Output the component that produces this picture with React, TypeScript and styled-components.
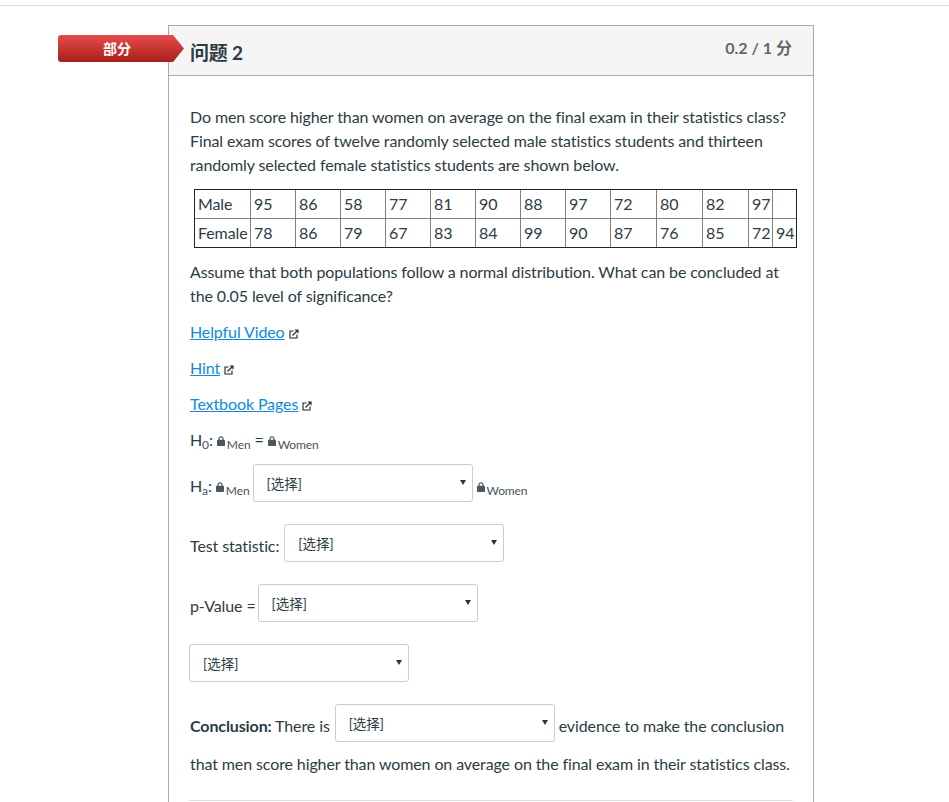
import React from "react";
import styled, { createGlobalStyle } from "styled-components";

const GlobalStyle = createGlobalStyle`
  html, body {
    margin: 0;
    height: 802px;
    overflow: hidden;
    background: #fff;
  }
  body {
    font-family: Lato, "Noto Sans CJK SC", sans-serif;
    font-size: 16px;
    line-height: 24px;
    letter-spacing: -0.11px;
    color: #2d3b45;
  }
`;

const TopRule = styled.div`
  height: 5px;
  border-bottom: 1px solid #ddd;
`;

const Main = styled.main`
  padding: 19px 0 0 168px;
`;

const Question = styled.section`
  position: relative;
  box-sizing: border-box;
  width: 646px;
  height: 780px;
  border: 1px solid #aaa;
  border-bottom: 0;
`;

const Badge = styled.div`
  position: absolute;
  left: -111px;
  top: 9px;
  box-sizing: border-box;
  width: 126px;
  height: 27px;
  padding-right: 8px;
  border-radius: 3px 0 0 3px;
  background: linear-gradient(#e64b4b, #a8201a);
  clip-path: polygon(0 0, 115px 0, 126px 50%, 115px 100%, 0 100%);
  color: #fff;
  font-size: 14px;
  font-weight: 700;
  line-height: 27px;
  text-align: center;
`;

const Header = styled.header`
  box-sizing: border-box;
  height: 50px;
  display: flex;
  justify-content: space-between;
  padding: 0 21px;
  background: #f5f5f5;
  border-bottom: 1px solid #aaa;
`;

const Title = styled.h2`
  margin: 14px 0 0;
  font-size: 19px;
  font-weight: 700;
  line-height: 26px;
  letter-spacing: -0.2px;
  color: #2d3b45;
`;

const Score = styled.div`
  margin-top: 10px;
  font-weight: 700;
  line-height: 24px;
  letter-spacing: 0;
  color: #5f6870;
`;

const Body = styled.div`
  padding: 17px 20px 0 21px;
`;

const Para = styled.p`
  margin: 12px 0;
`;

const DataTable = styled.table`
  margin: 12px 0 12px 4px;
  width: 603px;
  table-layout: fixed;
  border-collapse: separate;
  border-spacing: 0;
  border: 1px solid #222;
  font-size: 16px;
`;

const Cell = styled.td`
  box-sizing: border-box;
  height: 28px;
  padding: 0 0 0 3px;
  white-space: nowrap;
  overflow: hidden;

  & + & {
    border-left: 1px solid #808080;
  }
`;

const Row = styled.tr`
  & + & ${Cell} {
    height: 29px;
    border-top: 1px solid #808080;
  }
`;

const Column = styled.col<{ $width: number }>`
  width: ${(p) => p.$width}px;
`;

const ExternalLink = styled.a`
  color: #0e8ae0;
  text-decoration: underline;
`;

const ExternalMark = styled.svg`
  width: 10px;
  height: 10px;
  margin-left: 4px;
  vertical-align: -1px;
`;

const LockMark = styled.svg`
  width: 8px;
  height: 10px;
  margin-right: 2px;
`;

const Sub = styled.sub`
  font-size: 12px;
  line-height: 0;
  vertical-align: -3px;
  color: #46535e;
`;

const SelectBox = styled.span<{ $shift: number }>`
  position: relative;
  display: inline-block;
  margin-bottom: 10px;
  margin-left: ${(p) => p.$shift}px;
  vertical-align: 3px;

  &::after {
    content: "";
    position: absolute;
    right: 7px;
    top: 16px;
    border-style: solid;
    border-width: 5px 3px 0;
    border-color: #333 transparent transparent;
    pointer-events: none;
  }
`;

const Select = styled.select`
  appearance: none;
  box-sizing: border-box;
  display: block;
  width: 220px;
  height: 38px;
  padding: 2px 20px 0 13px;
  border: 1px solid #c7cdd1;
  border-radius: 3px;
  background: #fff;
  color: #2d3b45;
  font-family: Lato, "Noto Sans CJK SC", sans-serif;
  font-size: 13.5px;
`;

const Divider = styled.hr`
  margin: 24px 0 0 -1px;
  border: 0;
  border-top: 1px solid #ddd;
`;

const columnWidths = [55, 45, 45, 45, 45, 45, 45, 45, 45, 46, 46, 46, 24, 24];
const male = ["Male", "95", "86", "58", "77", "81", "90", "88", "97", "72", "80", "82", "97", ""];
const female = ["Female", "78", "86", "79", "67", "83", "84", "99", "90", "87", "76", "85", "72", "94"];

function External() {
  return (
    <ExternalMark viewBox="0 0 10 10" fill="none" stroke="#222" strokeWidth="1.1">
      <path d="M4.5 2H1v7h7V5.5" />
      <path d="M3.5 6.5 9 1M5.8 1H9v3.2" />
    </ExternalMark>
  );
}

function Lock() {
  return (
    <LockMark viewBox="0 0 8 10">
      <path d="M2 4.5V2.8a2 2 0 0 1 4 0v1.7" fill="none" stroke="#4b5660" strokeWidth="1.2" />
      <rect x="0" y="3.8" width="8" height="6.2" rx="0.8" fill="#4b5660" />
    </LockMark>
  );
}

function Choice({ shift = 0 }: { shift?: number }) {
  return (
    <SelectBox $shift={shift}>
      <Select defaultValue="">
        <option value="">[选择]</option>
      </Select>
    </SelectBox>
  );
}

export default function App() {
  return (
    <>
      <GlobalStyle />
      <TopRule />
      <Main>
        <Question>
          <Badge>部分</Badge>
          <Header>
            <Title>问题 2</Title>
            <Score>0.2 / 1 分</Score>
          </Header>
          <Body>
            <Para>
              Do men score higher than women on average on the final exam in their statistics class?
              Final exam scores of twelve randomly selected male statistics students and thirteen
              randomly selected female statistics students are shown below.
            </Para>
            <DataTable>
              <colgroup>
                {columnWidths.map((w, i) => (
                  <Column key={i} $width={w} />
                ))}
              </colgroup>
              <tbody>
                {[male, female].map((row) => (
                  <Row key={row[0]}>
                    {row.map((value, i) => (
                      <Cell key={i}>{value}</Cell>
                    ))}
                  </Row>
                ))}
              </tbody>
            </DataTable>
            <Para>
              Assume that both populations follow a normal distribution. What can be concluded at
              the 0.05 level of significance?
            </Para>
            <Para>
              <ExternalLink href="#">Helpful Video</ExternalLink>
              <External />
            </Para>
            <Para>
              <ExternalLink href="#">Hint</ExternalLink>
              <External />
            </Para>
            <Para>
              <ExternalLink href="#">Textbook Pages</ExternalLink>
              <External />
            </Para>
            <Para>
              H<Sub>0</Sub>: <Lock />
              <Sub>Men</Sub> = <Lock />
              <Sub>Women</Sub>
            </Para>
            <Para>
              H<Sub>a</Sub>: <Lock />
              <Sub>Men</Sub> <Choice shift={-1} /> <Lock />
              <Sub>Women</Sub>
            </Para>
            <Para>
              Test statistic: <Choice shift={1} />
            </Para>
            <Para>
              p-Value = <Choice shift={-2} />
            </Para>
            <Para>
              <Choice shift={-1} />
            </Para>
            <Para>
              <strong>Conclusion:</strong> There is <Choice shift={1} /> evidence to make the
              conclusion that men score higher than women on average on the final exam in their
              statistics class.
            </Para>
            <Divider />
          </Body>
        </Question>
      </Main>
    </>
  );
}
